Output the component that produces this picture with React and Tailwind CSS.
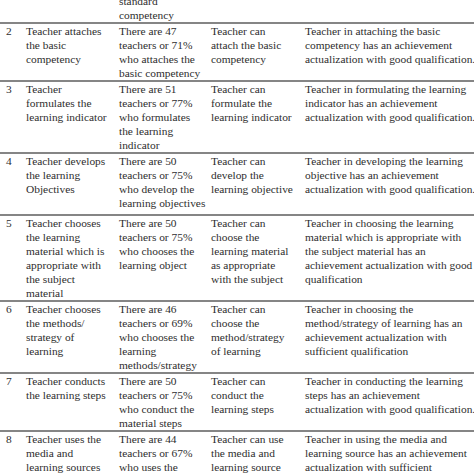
const rows = [
  {
    no: '2',
    cells: [
      ['Teacher attaches', 'the basic', 'competency'],
      ['There are 47', 'teachers or 71%', 'who attaches the', 'basic competency'],
      ['Teacher can', 'attach the basic', 'competency'],
      ['Teacher in attaching the basic', 'competency has an achievement', 'actualization with good qualification.'],
    ],
  },
  {
    no: '3',
    cells: [
      ['Teacher', 'formulates the', 'learning indicator'],
      ['There are 51', 'teachers or 77%', 'who formulates', 'the learning', 'indicator'],
      ['Teacher can', 'formulate the', 'learning indicator'],
      ['Teacher in formulating the learning', 'indicator has an achievement', 'actualization with good qualification.'],
    ],
  },
  {
    no: '4',
    cells: [
      ['Teacher develops', 'the learning', 'Objectives'],
      ['There are 50', 'teachers or 75%', 'who develop the', 'learning objectives'],
      ['Teacher can', 'develop the', 'learning objective'],
      ['Teacher in developing the learning', 'objective has an achievement', 'actualization with good qualification.'],
    ],
    extra: true,
  },
  {
    no: '5',
    cells: [
      ['Teacher chooses', 'the learning', 'material which is', 'appropriate with', 'the subject', 'material'],
      ['There are 50', 'teachers or 75%', 'who chooses the', 'learning object'],
      ['Teacher can', 'choose the', 'learning material', 'as appropriate', 'with the subject'],
      ['Teacher in choosing the learning', 'material which is appropriate with', 'the subject material has an', 'achievement actualization with good', 'qualification'],
    ],
  },
  {
    no: '6',
    cells: [
      ['Teacher chooses', 'the methods/', 'strategy of', 'learning'],
      ['There are 46', 'teachers or 69%', 'who chooses the', 'learning', 'methods/strategy'],
      ['Teacher can', 'choose the', 'method/strategy', 'of learning'],
      ['Teacher in choosing the', 'method/strategy of learning has an', 'achievement actualization with', 'sufficient qualification'],
    ],
  },
  {
    no: '7',
    cells: [
      ['Teacher conducts', 'the learning steps'],
      ['There are 50', 'teachers or 75%', 'who conduct the', 'material steps'],
      ['Teacher can', 'conduct the', 'learning steps'],
      ['Teacher in conducting the learning', 'steps has an achievement', 'actualization with good qualification.'],
    ],
  },
  {
    no: '8',
    cells: [
      ['Teacher uses the', 'media and', 'learning sources', 'in learning'],
      ['There are 44', 'teachers or 67%', 'who uses the', 'media and'],
      ['Teacher can use', 'the media and', 'learning source', 'in learning'],
      ['Teacher in using the media and', 'learning source has an achievement', 'actualization with sufficient', 'qualification'],
    ],
  },
];

function Lines({ lines }) {
  return (
    <div className="whitespace-nowrap">
      {lines.map((line, i) => (
        <div key={i}>{line}</div>
      ))}
    </div>
  );
}

export default function App() {
  return (
    <div
      className="w-[474px] h-[474px] overflow-hidden bg-white text-[#2e2e2e] text-[11.4px] leading-[14px]"
      style={{ fontFamily: '"Liberation Serif", "Times New Roman", serif' }}
    >
      {/* tail of the first row, cut off by the top edge */}
      <div className="grid grid-cols-[26px_93px_92px_94px_1fr] -mt-[6px]">
        <div />
        <div />
        <Lines lines={['standard', 'competency']} />
        <div />
        <div />
      </div>

      {rows.map((row) => (
        <div
          key={row.no}
          className={`grid grid-cols-[26px_93px_92px_94px_1fr] border-t-2 border-[#858585] ${row.extra ? 'pb-[4px]' : ''}`}
        >
          <div className="pl-[6px]">{row.no}</div>
          {row.cells.map((lines, i) => (
            <Lines key={i} lines={lines} />
          ))}
        </div>
      ))}
    </div>
  );
}
